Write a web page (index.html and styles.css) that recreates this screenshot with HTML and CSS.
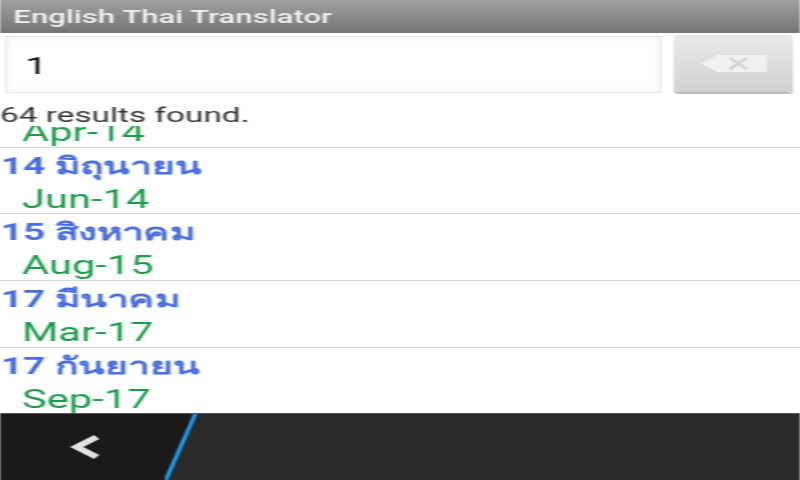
FILE: index.html
```html
<!DOCTYPE html>
<html lang="en">
<head>
    <meta charset="UTF-8">
    <meta name="viewport" content="width=device-width, initial-scale=1.0">
    <title>English Thai Translator</title>
    <link rel="stylesheet" href="styles.css">
</head>
<body>
    <!-- square 480 screen, stretched to fill the window -->
    <div class="app">
        <div class="titlebar">English Thai Translator</div>

        <div class="search">
            <div class="search-input">1</div>
            <button class="clear-btn">
                <svg width="39" height="19" viewBox="0 0 39 19">
                    <path d="M0 9.5 L9 1 H39 V18 H9 Z" fill="#f1f1f1"/>
                    <path d="M17 4 L27 15 M27 4 L17 15" stroke="#d0d0d0" stroke-width="2" fill="none"/>
                </svg>
            </button>
        </div>

        <div class="count">64 results found.</div>

        <!-- list is scrolled, first row is cut off at the top -->
        <div class="results">
            <div class="rows">
                <div class="row">
                    <div class="thai">14 เมษายน</div>
                    <div class="eng">Apr-14</div>
                </div>
                <div class="row">
                    <div class="thai">14 มิถุนายน</div>
                    <div class="eng">Jun-14</div>
                </div>
                <div class="row">
                    <div class="thai">15 สิงหาคม</div>
                    <div class="eng">Aug-15</div>
                </div>
                <div class="row">
                    <div class="thai">17 มีนาคม</div>
                    <div class="eng">Mar-17</div>
                </div>
                <div class="row">
                    <div class="thai">17 กันยายน</div>
                    <div class="eng">Sep-17</div>
                </div>
            </div>
        </div>

        <div class="actionbar">
            <div class="back">
                <svg width="18" height="28" viewBox="0 0 18 28">
                    <path d="M16 4 L4 14 L16 24" stroke="#e2e2e2" stroke-width="5" fill="none"/>
                </svg>
            </div>
            <svg class="slant" width="19" height="67" viewBox="0 0 19 67">
                <path d="M0 0 H18.5 L0.5 67 H0 Z" fill="#1a1a1a"/>
                <path d="M18.2 0 L0.2 67" stroke="#1c9ae6" stroke-width="2.6" fill="none"/>
            </svg>
            <div class="bar-rest"></div>
        </div>
    </div>
</body>
</html>
```

FILE: styles.css
```css
* {
    box-sizing: border-box;
}
body {
    margin: 0;
    font-family: Roboto, "Noto Sans", sans-serif;
    background-color: white;
    overflow: hidden;
}
.app {
    width: 480px;
    height: 480px;
    display: flex;
    flex-direction: column;
    overflow: hidden;
    transform: scaleX(1.6667);
    transform-origin: 0 0;
    filter: blur(0.5px);
}
.titlebar {
    height: 33px;
    padding-left: 8px;
    line-height: 35px;
    font-size: 18.7px;
    font-weight: 500;
    color: #f0f0f0;
    background: linear-gradient(#a0a0a0, #757575);
}
.search {
    display: flex;
    gap: 7px;
    height: 62px;
    padding: 3px 4px 0 3px;
}
.search-input {
    width: 394px;
    height: 57px;
    padding-left: 11px;
    line-height: 58px;
    font-size: 24px;
    color: #111;
    border: 1px solid #e6e6e6;
    box-shadow: inset 0 0 6px #eeeeee;
}
.clear-btn {
    width: 72px;
    height: 59px;
    padding: 0;
    margin-top: -1px;
    border: none;
    border-bottom: 2px solid #bdbdbd;
    border-radius: 3px;
    background: linear-gradient(#e8e8e8, #d2d2d2);
    display: flex;
    align-items: center;
    justify-content: center;
}
.count {
    height: 31px;
    line-height: 40px;
    font-size: 20px;
    color: #333;
    position: relative;
    background-color: white;
    z-index: 1;
}
.results {
    flex: 1;
    overflow: hidden;
}
.rows {
    margin-top: -45px;
}
.row {
    height: 66.7px;
    border-bottom: 1.5px solid #d8d8d8;
}
.row:last-child {
    border-bottom: none;
}
.thai {
    height: 34px;
    padding-left: 0.4px;
    line-height: 36px;
    font-size: 23.4px;
    font-weight: 700;
    color: #4a6ee0;
}
.eng {
    padding-left: 13.2px;
    line-height: 35px;
    font-size: 25px;
    color: #1c9b4b;
}
.actionbar {
    height: 67px;
    display: flex;
    background-color: #2a2a2a;
    border-top: 1px solid #555;
}
.back {
    width: 99px;
    padding-left: 3px;
    background-color: #1a1a1a;
    display: flex;
    align-items: center;
    justify-content: center;
}
.slant {
    flex-shrink: 0;
}
.bar-rest {
    flex: 1;
}
```
